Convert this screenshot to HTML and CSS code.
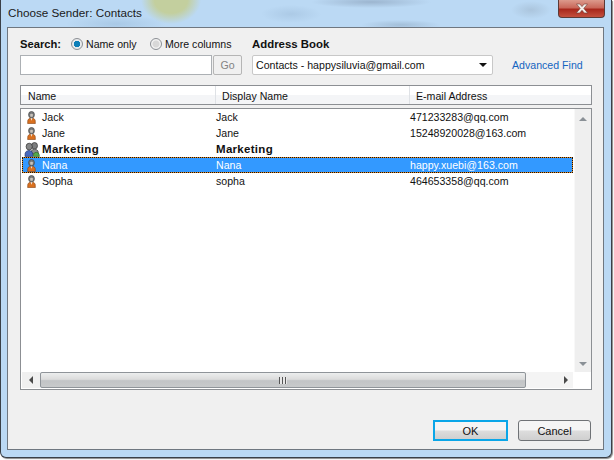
FILE: index.html
```html
<!DOCTYPE html>
<html lang="en">
<head>
<meta charset="utf-8">
<title>Choose Sender: Contacts</title>
<link rel="stylesheet" href="styles.css">
</head>
<body>
<svg class="defs" width="0" height="0" aria-hidden="true">
  <defs>
    <symbol id="person" viewBox="0 0 12 14">
      <ellipse cx="6" cy="4" rx="3.2" ry="3.6" fill="#77797a" stroke="#3e3e3e" stroke-width=".7"/>
      <path d="M4.5 3.5 Q6 2.4 7.6 3.4 L7.4 5.8 Q6 6.8 4.7 5.8Z" fill="#c9c3bb"/>
      <path d="M1.8 13.6 L2 10 Q2.6 8.2 4.6 7.8 L6 9.2 L7.4 7.8 Q9.4 8.2 10 10 L10.2 13.6Z" fill="#d9701f" stroke="#8a4512" stroke-width=".7"/>
      <path d="M5 8 L6 10.5 L7 8Z" fill="#f4e4d2"/>
    </symbol>
    <symbol id="group" viewBox="0 0 16 15">
      <ellipse cx="10.5" cy="3.8" rx="3" ry="3.3" fill="#7c7d7e" stroke="#333" stroke-width=".7"/>
      <path d="M7 12 L7.3 9 Q8 7.4 10.5 7.2 Q13.2 7.4 14 9 L14.5 12Z" fill="#8b8d8e" stroke="#3c3c3c" stroke-width=".7"/>
      <ellipse cx="5.2" cy="4.6" rx="3.1" ry="3.4" fill="#858687" stroke="#2f2f2f" stroke-width=".7"/>
      <path d="M1 14.4 L1.2 11 Q2 8.6 5 8.4 Q8 8.6 8.6 11 L8.9 14.4Z" fill="#4668bd" stroke="#25386f" stroke-width=".7"/>
      <path d="M9.4 14.4 L9.6 12 Q10.3 10.4 12.2 10.3 Q14.2 10.4 15 12 L15.4 14.4Z" fill="#55a84a" stroke="#2f6b2a" stroke-width=".7"/>
    </symbol>
  </defs>
</svg>
<main class="window">
  <header class="titlebar">
    <h1 class="title">Choose Sender: Contacts</h1>
    <button class="close" type="button" aria-label="Close">
      <svg width="14" height="11" viewBox="0 0 14 11"><path d="M1.5 1 H4.8 L7 3.6 L9.2 1 H12.5 L8.8 5.4 L12.7 10 H9.3 L7 7.3 L4.7 10 H1.3 L5.2 5.4Z" fill="#f3eee9" stroke="#6b3a34" stroke-width=".6"/></svg>
    </button>
  </header>
  <section class="panel">
    <div class="search-row">
      <div class="options">
        <strong class="search-label">Search:</strong>
        <span class="radio radio-on"></span><span class="radio-text">Name only</span>
        <span class="radio radio-off"></span><span class="radio-text">More columns</span>
      </div>
      <strong class="book-label">Address Book</strong>
    </div>
    <div class="control-row">
      <div class="textbox"></div>
      <button class="go" type="button">Go</button>
      <div class="select">
        <span>Contacts - happysiluvia@gmail.com</span>
        <i class="caret"></i>
      </div>
      <a class="advanced" href="#">Advanced Find</a>
    </div>
    <div class="columns">
      <div class="col col-name">Name</div>
      <div class="col col-display">Display Name</div>
      <div class="col col-email">E-mail Address</div>
    </div>
    <div class="list">
      <div class="list-top">
        <div class="rows">
          <div class="row"><svg class="ico"><use href="#person"/></svg><span class="c-name">Jack</span><span class="c-display">Jack</span><span class="c-email">471233283@qq.com</span></div>
          <div class="row"><svg class="ico"><use href="#person"/></svg><span class="c-name">Jane</span><span class="c-display">Jane</span><span class="c-email">15248920028@163.com</span></div>
          <div class="row row-group"><svg class="ico-group"><use href="#group"/></svg><span class="c-name">Marketing</span><span class="c-display">Marketing</span><span class="c-email"></span></div>
          <div class="row row-selected"><svg class="ico"><use href="#person"/></svg><span class="c-name">Nana</span><span class="c-display">Nana</span><span class="c-email">happy.xuebi@163.com</span></div>
          <div class="row"><svg class="ico"><use href="#person"/></svg><span class="c-name">Sopha</span><span class="c-display">sopha</span><span class="c-email">464653358@qq.com</span></div>
        </div>
        <div class="vscroll">
          <i class="arrow arrow-up"></i>
          <i class="arrow arrow-down"></i>
        </div>
      </div>
      <div class="hscroll">
        <div class="h-end"><i class="arrow arrow-left"></i></div>
        <div class="thumb"><i class="grip"></i></div>
        <div class="h-end h-end-right"><i class="arrow arrow-right"></i></div>
      </div>
    </div>
    <div class="actions">
      <button class="btn btn-ok" type="button">OK</button>
      <button class="btn" type="button">Cancel</button>
    </div>
  </section>
</main>
</body>
</html>
```
FILE: styles.css
```css
* { box-sizing: border-box; }
html, body { margin: 0; padding: 0; }
body {
  width: 614px;
  height: 460px;
  overflow: hidden;
  background: #fff;
  font: 10.6px/16px "Liberation Sans", Arial, sans-serif;
  color: #111;
}
.defs { position: absolute; }
.window {
  width: 612px;
  height: 458px;
  padding: 0 7px 7px 6px;
  display: flex;
  flex-direction: column;
  border-left: 1px solid #3a4048;
  border-right: 1px solid #3a4048;
  border-bottom: 1px solid #3a4048;
  border-radius: 0 0 6px 6px;
  box-shadow: 1px 1px 1px #8a8a8a;
  background:
    radial-gradient(ellipse 30px 24px at 170px 0, #c3cf9e 55%, transparent 100%),
    radial-gradient(ellipse 50px 9px at 115px 24px, #a9c9e6 0%, transparent 100%),
    radial-gradient(ellipse 60px 6px at 370px 2px, #9cb5cf 0%, transparent 100%),
    radial-gradient(ellipse 40px 5px at 400px 25px, #a3bfd9 0%, transparent 100%),
    radial-gradient(ellipse 30px 9px at 290px 14px, #accae6 0%, transparent 100%),
    radial-gradient(ellipse 20px 9px at 530px 10px, #abc5dd 0%, transparent 100%),
    #bbd9f4;
}
.titlebar {
  height: 27px;
  flex: none;
  display: flex;
  justify-content: space-between;
  align-items: flex-start;
}
.title {
  margin: 5px 0 0 1px;
  font: 400 11.7px/16px "Liberation Sans", sans-serif;
  color: #1a1a1a;
}
.close {
  width: 47px;
  height: 18px;
  padding: 0;
  margin-right: -1px;
  border: 1px solid #5c3a36;
  border-top: 0;
  border-radius: 0 0 4px 4px;
  background: linear-gradient(#dc9a8c 0%, #c9685a 45%, #a8281c 55%, #c4503e 100%);
  display: flex;
  align-items: center;
  justify-content: center;
}
.panel {
  flex: 1;
  min-height: 0;
  background: #f0f0f0;
  border: 1px solid #6f7780;
  padding: 8px 12px 8px 12px;
  display: flex;
  flex-direction: column;
}
.search-row {
  display: flex;
  height: 16px;
  align-items: center;
}
.options {
  width: 232px;
  display: flex;
  align-items: center;
}
.search-label { width: 51px; font-weight: 700; font-size: 11.2px; }
.radio {
  width: 12px;
  height: 12px;
  border-radius: 50%;
  border: 1px solid #8b8f94;
  margin-right: 3px;
  flex: none;
}
.radio-on { background: radial-gradient(circle, #0f7fb8 0 3px, #e8eaec 3.4px); }
.radio-off { background: radial-gradient(circle, #d8d8d8 0 3px, #f2f2f2 4px); }
.radio-text { width: 64px; white-space: nowrap; }
.book-label { font-weight: 700; font-size: 11.4px; }
.control-row {
  margin-top: 3px;
  height: 20px;
  display: flex;
  align-items: stretch;
}
.textbox {
  width: 192px;
  background: #fff;
  border: 1px solid #acb0b4;
}
.go {
  width: 29px;
  margin-left: 1px;
  padding: 0;
  font: inherit;
  color: #838383;
  background: #f0f0f0;
  border: 1px solid #b5b5b5;
  border-radius: 2px;
}
.select {
  width: 241px;
  margin-left: 10px;
  padding: 0 5px 0 3px;
  background: #fff;
  border: 1px solid #c8c8c8;
  border-radius: 2px;
  display: flex;
  align-items: center;
  justify-content: space-between;
}
.caret {
  border: 4px solid transparent;
  border-top: 4px solid #111;
  border-bottom: 0;
}
.advanced {
  margin: 0 0 0 19px;
  line-height: 20px;
  color: #1464c0;
  text-decoration: none;
}
.columns {
  margin-top: 10px;
  height: 20px;
  width: 572px;
  display: flex;
  border: 1px solid #8c8f93;
  background: linear-gradient(#fff 0 50%, #f4f5f7 50% 100%);
}
.col {
  line-height: 20px;
  padding-left: 6px;
  border-right: 1px solid #dfe2e6;
}
.col-name { width: 195px; padding-left: 7px; }
.col-display { width: 194px; }
.col-email { flex: 1; border-right: 0; }
.list {
  margin-top: 3px;
  width: 572px;
  height: 282px;
  background: #fff;
  border: 1px solid #8c8f93;
  padding: 0 0 1px 1px;
  display: flex;
  flex-direction: column;
}
.list-top {
  flex: 1;
  min-height: 0;
  display: flex;
}
.rows { flex: 1; }
.row {
  height: 16px;
  display: flex;
  align-items: center;
  padding-left: 4px;
  margin-right: 1px;
  white-space: nowrap;
}
.ico { width: 11px; height: 13px; flex: none; margin-right: 5px; }
.ico-group { width: 16px; height: 15px; flex: none; margin: 0 2px 0 -2px; }
.c-name { width: 174px; flex: none; }
.c-display { width: 194px; flex: none; }
.row-group { font-weight: 700; font-size: 11.5px; letter-spacing: .3px; }
.row-selected {
  color: #fff;
  border: 1px dotted #111;
  background: linear-gradient(#3399ff, #3399ff) padding-box, #e88a1c border-box;
  padding-left: 3px;
}
.vscroll {
  width: 17px;
  flex: none;
  background: #efefef;
  border-left: 1px solid #f8f8f8;
  display: flex;
  flex-direction: column;
  justify-content: space-between;
  align-items: center;
  padding: 8px 0 6px;
}
.arrow { display: block; width: 0; height: 0; border: 4px solid transparent; }
.arrow-up { border-top: 0; border-bottom: 4px solid #8a9096; }
.arrow-down { border-bottom: 0; border-top: 4px solid #8a9096; }
.arrow-left { border-left: 0; border-right: 4px solid #4a4a4a; }
.arrow-right { border-right: 0; border-left: 4px solid #4a4a4a; }
.hscroll {
  height: 16px;
  flex: none;
  display: flex;
  margin-right: 18px;
  background: #f0f0f0;
}
.h-end {
  width: 18px;
  flex: none;
  display: flex;
  align-items: center;
  justify-content: center;
}
.h-end-right {
  flex: 1;
  justify-content: flex-end;
  padding-right: 5px;
  background: #f4f4f4;
}
.thumb {
  width: 486px;
  flex: none;
  border: 1px solid #8f9499;
  border-radius: 2px;
  background: linear-gradient(#eceeee 0%, #dcdcdc 45%, #c2c4c6 55%, #c8cacb 100%);
  display: flex;
  align-items: center;
  justify-content: center;
}
.grip {
  display: block;
  width: 8px;
  height: 7px;
  background: repeating-linear-gradient(90deg, #555 0 1px, #e8e8e8 1px 3px);
}
.actions {
  margin-top: auto;
  width: 571px;
  display: flex;
  justify-content: flex-end;
  gap: 10px;
}
.btn {
  width: 73px;
  height: 21px;
  padding: 0;
  font: inherit;
  font-size: 11px;
  color: #111;
  border: 1px solid #6f7276;
  border-radius: 3px;
  background: linear-gradient(#f5f5f5 0 45%, #dcdcdc 55%, #cfcfcf 100%);
}
.btn-ok {
  width: 75px;
  border: 2px solid #0aa6e8;
  border-radius: 0;
}
```
